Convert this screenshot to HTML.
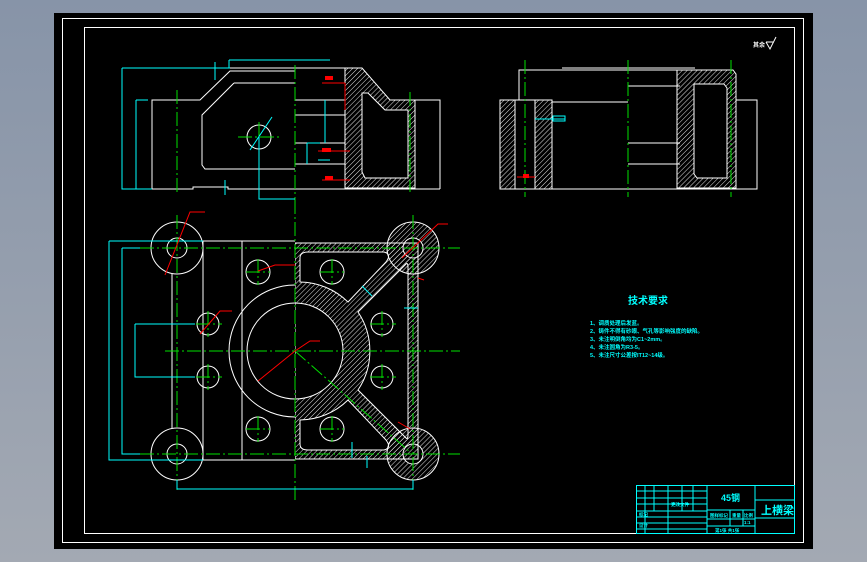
<!DOCTYPE html>
<html><head><meta charset="utf-8"><style>
html,body{margin:0;padding:0;width:867px;height:562px;overflow:hidden;background:linear-gradient(#8794a8,#a3a9b3);}
svg{position:absolute;left:0;top:0}
text{font-family:"Liberation Sans","Noto Sans CJK SC",sans-serif;fill:#00ffff;font-weight:bold}
.c{shape-rendering:crispEdges}
</style></head><body>
<svg width="867" height="562" viewBox="0 0 867 562">
<defs>
<pattern id="h" width="3.5" height="3.5" patternUnits="userSpaceOnUse" patternTransform="rotate(45)">
<line x1="0" y1="0" x2="0" y2="3.5" stroke="#fff" stroke-width="0.9"/>
</pattern>
<clipPath id="rh"><rect x="295" y="200" width="200" height="300"/></clipPath>
</defs>
<rect x="54" y="13" width="759" height="536" fill="#000"/>
<g fill="none" stroke="#fff" stroke-width="1" class="c">
<rect x="62.5" y="18.5" width="741" height="524"/>
<rect x="84.5" y="27.5" width="710" height="506"/>
</g>

<!-- FRONT VIEW -->
<g fill="none" stroke="#fff" stroke-width="1">
<path d="M152,189 L152,100 L200,100 L230,71 L295,71"/>
<path class="c" d="M230,68 L345,68"/>
<path d="M234,83 L295,83 M234,83 L202,115 L202,165 L205,169 L295,169"/>
<path class="c" d="M152,189 L193,189 L193,187 L228,187 L228,189 L440,189"/>
<circle cx="259" cy="137" r="12"/>
<path class="c" d="M295,143 L345,143 M295,164 L345,164 M295,115 L345,115 M295,100 L345,100"/>
<path class="c" d="M415,100 L440,100 L440,189"/>
</g>
<path fill="url(#h)" stroke="#fff" stroke-width="1" fill-rule="evenodd" d="M345,68 L362,68 L390,100 L415,100 L415,188 L345,188 Z M362,93 L368,93 L385,110 L408,110 L408,178 L365,178 L362,172 Z"/>
<g fill="none" stroke="#00e000" stroke-width="1" stroke-dasharray="14,3,2,3" class="c">
<path d="M177,90 V192 M295,65 V205 M410,92 V192"/>
<path d="M238,137 H280 M259,122 V152"/>
</g>
<g fill="none" stroke="#00ffff" stroke-width="1" class="c">
<path d="M122,68 H230 M122,68 V189 H152 M136,100 H148 M136,100 V189"/>
<path d="M229,60 H330 M229,60 V68"/>
<path d="M259,137 V199 H295"/>
<path d="M325,100 V143 M307,143 V164 M307,143 H320 M318,160 H330"/>
<path d="M215,62 V80 M225,180 V195"/>
</g>
<path d="M250,150 L272,117" stroke="#00ffff"/>
<g fill="#ff0000"><rect x="325" y="76" width="8" height="4"/><rect x="322" y="148" width="9" height="4"/><rect x="325" y="176" width="8" height="4"/></g>
<g stroke="#ff0000" class="c"><path d="M322,83 H345 M318,151 H350 M322,180 H350 M345,83 V110"/></g>

<!-- RIGHT VIEW -->
<g fill="url(#h)" stroke="#fff" stroke-width="1">
<rect x="500" y="100" width="15" height="89" class="c"/>
<rect x="535" y="100" width="17" height="89" class="c"/>
<path fill-rule="evenodd" d="M677,70 L733,70 L736,74 L736,188 L677,188 Z M694,84 L724,84 L727,88 L727,178 L697,178 L694,174 Z"/>
</g>
<g fill="none" stroke="#fff" stroke-width="1" class="c">
<path d="M519,100 V70 H677 M562,68 H695 M515,100 H535 M552,102 H628 M628,86 H680 M628,143 H680 M628,164 H680 M736,100 H757 V189 H500"/>
</g>
<g fill="none" stroke="#00e000" stroke-width="1" stroke-dasharray="14,3,2,3" class="c"><path d="M525,60 V197 M628,60 V197 M731,60 V197"/></g>
<g stroke="#00ffff" fill="none" class="c"><path d="M535,119 H565"/><rect x="553" y="116" width="12" height="5"/></g>
<path d="M517,177 H535" stroke="#ff0000" class="c"/>
<rect x="523" y="174" width="6" height="4" fill="#ff0000"/>

<!-- PLAN VIEW -->
<path clip-path="url(#rh)" fill="url(#h)" stroke="#fff" stroke-width="1" fill-rule="evenodd" d="
M295,243 L418,243 L418,459 L295,459 Z
M295,303 A48,48 0 1,0 295,399 A48,48 0 1,0 295,303 Z
M300,258 Q300,252 308,252 L384,252 Q392,254 386,262 L348,302 A70,70 0 0,0 300,282 Z
M300,444 Q300,450 308,450 L384,450 Q392,448 386,440 L348,400 A70,70 0 0,1 300,420 Z
M358,312 L406,264 Q408,262 408,268 L408,434 Q408,440 406,438 L358,390 A70,70 0 0,0 358,312 Z"/>
<g fill="url(#h)" stroke="#fff" stroke-width="1" fill-rule="evenodd">
<path d="M387,248 A26,26 0 1,0 439,248 A26,26 0 1,0 387,248 Z M403,248 A10,10 0 1,0 423,248 A10,10 0 1,0 403,248 Z"/>
<path d="M387,454 A26,26 0 1,0 439,454 A26,26 0 1,0 387,454 Z M403,454 A10,10 0 1,0 423,454 A10,10 0 1,0 403,454 Z"/>
</g>
<g fill="none" stroke="#fff" stroke-width="1">
<circle cx="177" cy="248" r="26"/><circle cx="177" cy="248" r="10"/>
<circle cx="177" cy="454" r="26"/><circle cx="177" cy="454" r="10"/>
<path class="c" d="M203,241 H295 M203,460 H295 M203,241 V460 M242,241 V460 M172,274 V428"/>
<path d="M295,285 A66,66 0 0,0 295,417"/>
<path d="M295,303 A48,48 0 0,0 295,399"/>
<circle cx="208" cy="324" r="11"/><circle cx="208" cy="377" r="11"/>
<circle cx="258" cy="272" r="12"/><circle cx="258" cy="429" r="12"/>
<circle cx="332" cy="272" r="12"/><circle cx="332" cy="429" r="12"/>
<circle cx="382" cy="324" r="11"/><circle cx="382" cy="377" r="11"/>
</g>
<g fill="none" stroke="#00e000" stroke-width="1" stroke-dasharray="14,3,2,3" class="c">
<path d="M140,248 H460 M140,454 H460 M165,351 H460"/>
<path d="M177,215 V490 M413,215 V490 M295,200 V500"/>
<path d="M196,324 H222 M208,311 V337 M196,377 H222 M208,364 V390 M370,324 H396 M382,311 V337 M370,377 H396 M382,364 V390"/>
<path d="M246,272 H270 M258,259 V285 M246,429 H270 M258,416 V442 M320,272 H344 M332,259 V285 M320,429 H344 M332,416 V442"/>
</g>
<path d="M295,351 L410,452" stroke="#00e000" stroke-dasharray="14,3,2,3" fill="none"/>
<g fill="none" stroke="#00ffff" stroke-width="1" class="c">
<path d="M109,241 H203 M109,241 V460 H203 M122,248 H140 M122,248 V454 H140 M135,324 H195 M135,324 V377 H195 M177,480 V489 H413 V480"/>
<path d="M404,308 H418 M352,442 V458 M367,456 V468"/>
</g>
<path d="M362,286 L372,296" stroke="#00ffff"/>
<g stroke="#ff0000" fill="none"><path d="M165,275 L190,212 H205 M200,334 L220,311 H232 M258,271 L275,265 H295 M258,381 L295,351 L310,341 H320 M402,258 L438,224 H448 M418,278 L424,280 M398,422 L410,429"/></g>

<!-- technical requirements -->
<text x="628" y="304" font-size="10">技术要求</text>
<g font-size="5.5">
<text x="590" y="325">1、调质处理后发蓝。</text>
<text x="590" y="333">2、铸件不得有砂眼、气孔等影响强度的缺陷。</text>
<text x="590" y="341">3、未注明倒角均为C1~2mm。</text>
<text x="590" y="349">4、未注圆角为R3-5。</text>
<text x="590" y="357">5、未注尺寸公差按IT12~14级。</text>
</g>
<text x="753" y="47" font-size="6" style="fill:#fff">其余</text>
<path d="M766,42 L770,49 L776,37 M766,42 H773" stroke="#fff" fill="none"/>

<!-- title block -->
<g fill="none" stroke="#00ffff" stroke-width="1" class="c">
<rect x="636.5" y="485.5" width="158" height="48"/>
<path d="M636,491 H707 M636,498 H707 M636,504 H707 M636,511 H707 M636,517 H707 M636,523 H707 M636,529 H707"/>
<path d="M645,485 V534 M654,485 V511 M668,485 V534 M682,485 V511 M693,485 V511 M707,485 V534 M755,485 V534"/>
<path d="M707,510 H755 M707,519 H755 M707,526 H755 M730,510 V526 M743,510 V526 M755,500 H795 M755,518 H795"/>
</g>
<text x="721" y="501" font-size="9">45钢</text>
<text x="761" y="514" font-size="11">上横梁</text>
<g font-size="4.5"><text x="710" y="517">图样标记</text><text x="732" y="517">重量</text><text x="744" y="517">比例</text><text x="715" y="532">第1张 共1张</text><text x="744" y="524">1:1</text><text x="639" y="516">标记</text><text x="639" y="527">设计</text><text x="671" y="506">更改文件</text></g>
</svg>
</body></html>
